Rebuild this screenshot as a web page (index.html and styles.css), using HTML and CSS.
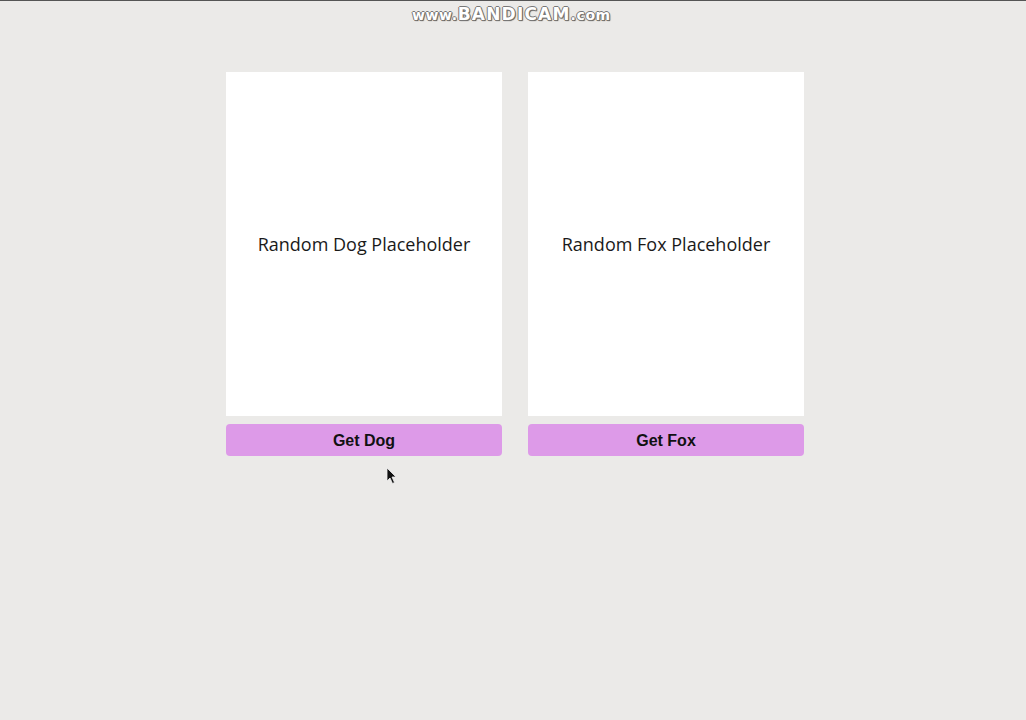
FILE: index.html
```html
<!DOCTYPE html>
<html lang="en">
<head>
    <meta charset="UTF-8">
    <meta name="viewport" content="width=device-width, initial-scale=1.0">
    <title>Random Animals</title>
    <link rel="stylesheet" href="styles.css">
</head>
<body>

    <!-- recorder watermark -->
    <div class="watermark">www.<b>BANDICAM</b>.com</div>

    <main class="cards">
        <!-- Dog card -->
        <div class="card">
            <div class="picture">
                <p>Random Dog Placeholder</p>
            </div>
            <button class="get-btn">Get Dog</button>
        </div>

        <!-- Fox card -->
        <div class="card">
            <div class="picture">
                <p>Random Fox Placeholder</p>
            </div>
            <button class="get-btn">Get Fox</button>
        </div>
    </main>

    <!-- mouse pointer -->
    <svg class="pointer" width="12" height="18" viewBox="0 0 12 18">
        <path d="M1 1 L1 14 L4 11 L6.5 16.5 L8.5 15.5 L6 10 L10 10 Z" fill="#111" stroke="#eee" stroke-width="0.8"/>
    </svg>

</body>
</html>
```

FILE: styles.css
```css
body {
    margin: 0;
    padding: 0;
    background-color: #ebeae8;
    border-top: 1px solid #555;
    min-height: 719px;
    font-family: "Liberation Sans", Arial, sans-serif;
    position: relative;
}

.watermark {
    position: absolute;
    top: 3px;
    left: 412px;
    font-family: "DejaVu Sans", sans-serif;
    font-size: 14px;
    font-weight: bold;
    color: #fff;
    letter-spacing: 0.6px;
    text-shadow: 1px 0 0 #777, -1px 0 0 #777, 0 1px 0 #777, 0 -1px 0 #777, 1px 1px 1px #444;
}

.watermark b {
    font-size: 17px;
    letter-spacing: 1.2px;
}

.cards {
    display: flex;
    justify-content: center;
    gap: 26px;
    padding-top: 71px;
    padding-left: 4px;
}

.card {
    width: 276px;
    display: flex;
    flex-direction: column;
    gap: 8px;
}

.picture {
    height: 344px;
    background-color: #fff;
    display: flex;
    align-items: center;
    justify-content: center;
}

.picture p {
    margin: 0;
    font-family: "Open Sans", sans-serif;
    font-size: 18px;
    color: #1a1a1a;
}

.get-btn {
    height: 32px;
    padding-top: 2px;
    border: none;
    border-radius: 4px;
    background-color: #dd9ae8;
    color: #111;
    font-family: "Liberation Sans", Arial, sans-serif;
    font-size: 16px;
    font-weight: bold;
    cursor: pointer;
}

.pointer {
    position: absolute;
    left: 386px;
    top: 466px;
}
```
